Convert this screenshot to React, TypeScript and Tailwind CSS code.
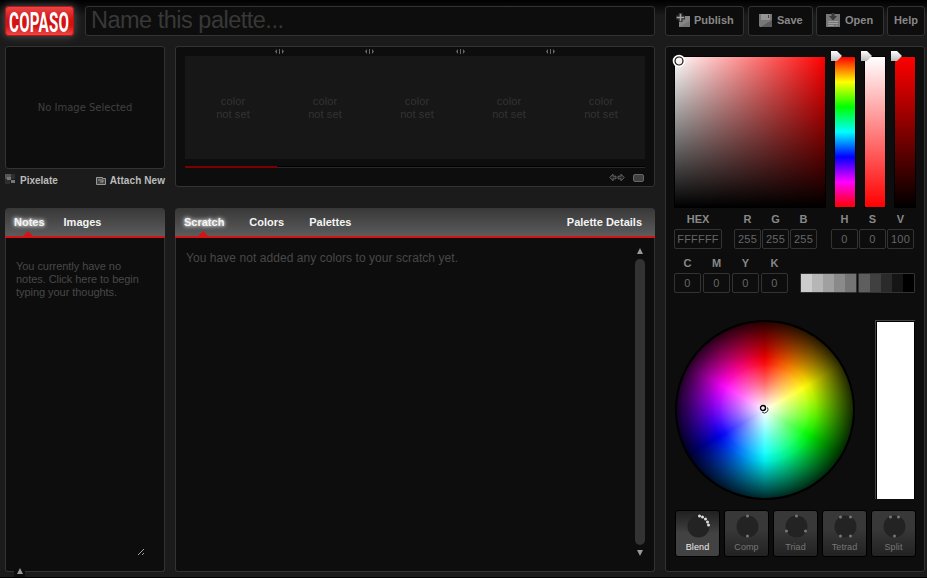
import type { ReactNode } from 'react';

type Dot = [number, number];

const SCHEMES: { name: string; dots: Dot[] }[] = [
  { name: 'Blend', dots: [[13.5, 2], [16.5, 3], [19.5, 5], [21.5, 8], [22.5, 11]] },
  { name: 'Comp', dots: [[12.5, 2], [12.5, 22]] },
  { name: 'Triad', dots: [[12.5, 2], [2.5, 17], [21.5, 17]] },
  { name: 'Tetrad', dots: [[7.5, 3], [17.5, 3], [7.5, 22], [17.5, 22]] },
  { name: 'Split', dots: [[8.5, 3], [16.5, 3], [12.5, 22]] },
];

const LIGHT_GRAYS = ['#cccccc', '#b6b6b6', '#a0a0a0', '#8a8a8a', '#747474'];
const DARK_GRAYS = ['#5e5e5e', '#404040', '#2a2a2a', '#151515', '#000000'];

export default function App() {
  return (
    <div className="flex h-[578px] w-[927px] flex-col overflow-hidden border-b border-black bg-[#1b1b1b] bg-[linear-gradient(to_bottom,#000_0px,#1b1b1b_16px)] pl-[5px] pt-[6px] font-['Liberation_Sans',Arial,sans-serif]">
      <Header />
      <main className="mt-[10px] flex h-[526px] gap-[10px]">
        <div className="flex w-[160px] flex-col">
          <ImageBox />
          <TabPanel active="Notes" tabs={['Images']} gap="ml-[19px]">
            <p className="pl-[10px] pt-[22px] text-[11px] leading-[13px] tracking-[-0.05px] text-[#484848]">
              You currently have no
              <br />
              notes. Click here to begin
              <br />
              typing your thoughts.
            </p>
            <svg className="absolute bottom-[15px] right-[19px] h-[8px] w-[8px]" viewBox="0 0 8 8">
              <path d="M1 7 7 1M5 7 7 5" stroke="#b5b5b5" strokeWidth=".9" />
            </svg>
            <div className="absolute -bottom-[6px] left-[8px] flex h-[12px] w-[11px] items-center justify-center bg-[#0d0d0d]">
              <Triangle />
            </div>
          </TabPanel>
        </div>
        <div className="flex w-[480px] flex-col">
          <PaletteStrip />
          <TabPanel active="Scratch" tabs={['Colors', 'Palettes']} gap="ml-[25px]" right="Palette Details">
            <div className="flex h-full justify-between">
              <p className="pl-[10px] pt-[12px] text-[12px] leading-[16px] tracking-[0.06px] text-[#484848]">
                You have not added any colors to your scratch yet.
              </p>
              <div className="mr-[9px] flex w-[10px] flex-col items-center pt-[10px]">
                <Triangle />
                <div className="my-[5px] h-[286px] w-[10px] rounded-full bg-[#333]" />
                <Triangle down />
              </div>
            </div>
          </TabPanel>
        </div>
        <ColorPanel />
      </main>
    </div>
  );
}

function Header() {
  return (
    <header className="flex h-[30px]">
      <Logo />
      <div className="ml-[11px] h-[30px] w-[570px] rounded-[3px] border border-[#333] bg-[#0d0d0d] pl-[5px] text-[23.5px] leading-[27px] tracking-[-0.5px] text-[#383838]">
        Name this palette...
      </div>
      <div className="ml-[10px] flex text-[11px] font-bold text-[#888]">
        <ToolButton className="w-[79px] pl-[10px]">
          <svg className="mr-[3px] h-[15px] w-[15px]" viewBox="0 0 15 15">
            <path d="M3 4h5l1-1h5v11H3z" fill="#858585" />
            <path d="M3 14 14 8v6z" fill="#757575" />
            <path d="M2.500 0h4v2.500H9v4H6.500V9h-4V6.500H0v-4h2.500z" fill="#333" />
            <path d="M4 1h1v3h3v1H5v3H4V5H1V4h3z" fill="#aaa" stroke="#999" strokeWidth=".5" />
          </svg>
          Publish
        </ToolButton>
        <ToolButton className="ml-[4px] w-[65px] pl-[10px]">
          <svg className="mr-[5px] h-[13px] w-[13px]" viewBox="0 0 13 13">
            <path d="M0 0h13v13H1l-1-1z" fill="#777" />
            <path d="M2 0h9v6H2z" fill="#959595" />
            <path d="M2 13 13 6v7z" fill="#5c5c5c" />
            <path d="M9 1h1v3H9z" fill="#444" />
          </svg>
          Save
        </ToolButton>
        <ToolButton className="ml-[3px] w-[68px] pl-[9px]">
          <svg className="mr-[5px] h-[14px] w-[14px]" viewBox="0 0 14 14">
            <path d="M0 1h14v13H0z" fill="#777" />
            <path d="M2 8.500h10M2 10.500h10M2 12.500h6M10 12.500h1" stroke="#a0a0a0" />
            <path d="M5.500 0h3v3h2.500L7 7.500 3 3h2.500z" fill="#3a3a3a" />
          </svg>
          Open
        </ToolButton>
        <ToolButton className="ml-[3px] w-[38px] justify-center">Help</ToolButton>
      </div>
    </header>
  );
}

function Logo() {
  return (
    <svg
      className="h-[30px] w-[69px] rounded-[4px] bg-[#d61b1b] shadow-[0_0_9px_#555]"
      viewBox="0 0 69 30"
    >
      <defs>
        <linearGradient id="logoFill" x2="0" y2="1">
          <stop stopColor="#e64a4a" />
          <stop offset=".45" stopColor="#d41313" />
          <stop offset=".65" stopColor="#d21010" />
          <stop offset="1" stopColor="#ee4a4a" />
        </linearGradient>
      </defs>
      <rect x=".5" y=".5" width="68" height="29" rx="3.5" fill="url(#logoFill)" stroke="#bd1212" />
      <text
        transform="translate(4 25.500) scale(.54 1)"
        textLength="111"
        fill="#fff"
        className="font-['Roboto',sans-serif] text-[28px] font-bold"
      >
        COPASO
      </text>
    </svg>
  );
}

function ToolButton({ className, children }: { className: string; children: ReactNode }) {
  return (
    <button
      type="button"
      className={'flex h-[30px] items-center rounded-[3px] border border-[#333] bg-[#0d0d0d] pb-[2px] ' + className}
    >
      {children}
    </button>
  );
}

function ImageBox() {
  return (
    <>
      <div className="flex h-[123px] w-[160px] items-center justify-center rounded-[3px] border border-[#333] bg-[#0d0d0d] font-['DejaVu_Sans',Verdana,sans-serif] text-[10px] text-[#404040]">
        No Image Selected
      </div>
      <div className="mb-[21px] mt-[5px] flex h-[13px] items-center text-[10px] font-bold text-[#bbb]">
        <svg className="mb-[3px] mr-[5px] h-[10px] w-[10px]" viewBox="0 0 10 10">
          <path d="M5 0h5v5H5zM0 5h5v5H0z" fill="#2e2e2e" />
          <path d="M0 0h6v5H0z" fill="#555" />
          <path d="M2 3h4v3H2zM6 6h4v3H6z" fill="#777" />
        </svg>
        Pixelate
        <svg className="ml-auto mr-[4px] h-[8px] w-[10px]" viewBox="0 0 10 8">
          <path d="M.5.5h6v1h3v6h-9z" fill="#444" stroke="#999" />
          <path d="M2 3h5v2H4" fill="none" stroke="#999" />
        </svg>
        <span className="tracking-[0.08px]">Attach New</span>
      </div>
    </>
  );
}

function PaletteStrip() {
  return (
    <section className="mb-[21px] h-[141px] rounded-[3px] border border-[#333] bg-[#0d0d0d] px-[9px]">
      <div className="flex h-[9px] items-center pl-[90px]">
        {[0, 1, 2, 3].map((i) => (
          <svg key={i} className="mr-[81.3px] h-[5px] w-[9px] shrink-0" viewBox="0 0 9 5">
            <path d="M2 0v5L0 2.500zM7 0v5L9 2.500z" fill="#666" />
            <path d="M4.500 0v5" stroke="#666" />
          </svg>
        ))}
      </div>
      <div className="grid h-[103px] grid-cols-5 bg-[#171717]">
        {[0, 1, 2, 3, 4].map((i) => (
          <div
            key={i}
            className="flex items-center justify-center pl-[4px] text-center text-[11px] leading-[13px] tracking-[0.1px] text-[#333]"
          >
            color
            <br />
            not set
          </div>
        ))}
      </div>
      <div className="mt-[7px] h-[2px] border-b border-[#2a2a2a] bg-black">
        <div className="h-[2px] w-[92px] bg-[#7c0000]" />
      </div>
      <div className="mt-[4px] flex h-[11px] items-center justify-end pr-[1px]">
        <svg className="h-[9px] w-[16px]" viewBox="0 0 16 9">
          <path
            d="M.8 4.500 4 1.200v2h3v2.600H4v2zM15.200 4.500 12 1.200v2H9v2.600h3v2z"
            fill="#222"
            stroke="#777"
            strokeWidth=".8"
          />
        </svg>
        <div className="ml-[8px] h-[8px] w-[11px] rounded-[2px] border border-[#666] bg-[#404040]" />
      </div>
    </section>
  );
}

function TabPanel({
  active,
  tabs,
  gap,
  right,
  children,
}: {
  active: string;
  tabs: string[];
  gap: string;
  right?: string;
  children: ReactNode;
}) {
  return (
    <section className="flex h-[364px] flex-col">
      <nav className="flex h-[30px] items-center rounded-t-[4px] border-b-2 border-[#d41414] bg-linear-to-b from-[#383838] to-[#5c5c5c] pl-[9px] pr-[13px] text-[11px] font-bold text-[#f4f4f4]">
        <span className="relative flex h-[28px] items-center [text-shadow:0_0_5px_#fff,0_0_3px_#bbb]">
          {active}
          <svg className="absolute bottom-0 left-1/2 -ml-[6px] h-[5px] w-[10px]" viewBox="0 0 10 5">
            <path d="M0 5 5 0l5 5z" fill="#d41414" />
          </svg>
        </span>
        {tabs.map((t) => (
          <span key={t} className={gap}>
            {t}
          </span>
        ))}
        {right && <span className="ml-auto">{right}</span>}
      </nav>
      <div className="relative min-h-0 flex-1 rounded-b-[3px] border border-t-0 border-[#333] bg-[#0d0d0d]">
        {children}
      </div>
    </section>
  );
}

function Triangle({ down }: { down?: boolean }) {
  return (
    <svg className={'h-[6px] w-[6px] shrink-0 ' + (down ? 'rotate-180' : '')} viewBox="0 0 6 6">
      <path d="M0 6 3 0l3 6z" fill="#999" />
    </svg>
  );
}

function ColorPanel() {
  return (
    <section className="h-[526px] w-[260px] rounded-[3px] border border-[#333] bg-[#0d0d0d] pl-[8px] pt-[10px]">
      <div className="flex h-[151px] pl-[1px]">
        <div className="relative h-[150px] w-[150px] bg-[linear-gradient(to_bottom,transparent,#000),linear-gradient(to_right,#fff,#f00)] outline outline-black">
          <svg className="absolute -left-[3px] -top-[3px] h-[14px] w-[14px]" viewBox="0 0 14 14">
            <circle cx="7" cy="7" r="5" fill="none" stroke="#fff" strokeWidth="2.600" />
            <circle cx="7" cy="7" r="4" fill="none" stroke="#111" strokeWidth="1.200" />
          </svg>
        </div>
        <Slider className="bg-[linear-gradient(to_bottom,#f00,#ff0,#0f0,#0ff,#00f,#f0f,#f00)]" />
        <Slider className="bg-[linear-gradient(to_bottom,#fff,#f00)]" />
        <Slider className="bg-[linear-gradient(to_bottom,#f00,#000)]" />
      </div>
      <div className="mt-[5px] flex">
        <Field label="HEX" value="FFFFFF" className="w-[48px]" />
        <Field label="R" value="255" className="ml-[12px] w-[27px]" />
        <Field label="G" value="255" className="ml-[1px] w-[27px]" />
        <Field label="B" value="255" className="ml-[1px] w-[27px]" />
        <Field label="H" value="0" className="ml-[14px] w-[27px]" />
        <Field label="S" value="0" className="ml-[1px] w-[27px]" />
        <Field label="V" value="100" className="ml-[1px] w-[27px]" />
      </div>
      <div className="mt-[8px] flex items-end">
        <div className="flex gap-[2px]">
          {['C', 'M', 'Y', 'K'].map((l) => (
            <Field key={l} label={l} value="0" className="w-[27px]" />
          ))}
        </div>
        <div className="ml-[12px] flex h-[20px] gap-[1px]">
          <Grays colors={LIGHT_GRAYS} />
          <Grays colors={DARK_GRAYS} />
        </div>
      </div>
      <div className="mt-[27px] flex h-[180px] justify-between pl-[1px] pr-[9px]">
        <Wheel />
        <div className="h-[179px] w-[40px] border-l border-t border-[#444] bg-black pl-[1px] pt-[1px]">
          <div className="h-[177px] w-[37px] bg-white" />
        </div>
      </div>
      <div className="mt-[10px] flex gap-[4px] pl-[1px]">
        {SCHEMES.map((s, i) => (
          <SchemeButton key={s.name} name={s.name} dots={s.dots} active={i === 0} />
        ))}
      </div>
    </section>
  );
}

function Slider({ className }: { className: string }) {
  return (
    <div className={'relative ml-[10px] h-[150px] w-[20px] outline outline-black ' + className}>
      <svg className="absolute -left-[4px] -top-[6px] h-[10px] w-[11px]" viewBox="0 0 11 10">
        <defs>
          <linearGradient id="thumb" x2="0" y2="1">
            <stop stopColor="#fff" />
            <stop offset="1" stopColor="#bbb" />
          </linearGradient>
        </defs>
        <path d="M0 0h6l5 5-5 5H0z" fill="url(#thumb)" />
      </svg>
    </div>
  );
}

function Field({ label, value, className }: { label: string; value: string; className: string }) {
  return (
    <label className={'flex flex-col items-center ' + className}>
      <span className="h-[16px] text-[11px] font-bold leading-[13px] text-[#888]">{label}</span>
      <span className="flex h-[20px] w-full items-center justify-center rounded-[2px] border border-[#333] text-[11px] tracking-[0.2px] text-[#666]">
        {value}
      </span>
    </label>
  );
}

function Grays({ colors }: { colors: string[] }) {
  return (
    <div className="flex h-[20px] w-[57px] rounded-[1px] border border-[#333]">
      {colors.map((c) => (
        <div key={c} className="flex-1" style={{ backgroundColor: c }} />
      ))}
    </div>
  );
}

function Wheel() {
  return (
    <div className="relative h-[180px] w-[180px] rounded-full border-2 border-black bg-[radial-gradient(closest-side,#fff_0%,rgba(255,255,255,0.42)_30%,rgba(255,255,255,0.06)_52%,transparent_60%),radial-gradient(closest-side,transparent_48%,rgba(0,0,0,0.08)_58%,rgba(0,0,0,0.84)_100%),conic-gradient(#f00,#ff0,#0f0,#0ff,#00f,#f0f,#f00)]">
      <svg className="absolute left-[82px] top-[82px] h-[12px] w-[12px]" viewBox="0 0 12 12" fill="none">
        <circle cx="4" cy="4" r="2.500" stroke="#000" strokeWidth="1.400" />
        <path d="M8.500 3.500A3.600 3.600 0 0 1 3.200 8.200" stroke="#333" />
      </svg>
    </div>
  );
}

function SchemeButton({ name, dots, active }: { name: string; dots: Dot[]; active: boolean }) {
  return (
    <button
      type="button"
      className={
        'flex h-[47px] w-[45px] flex-col items-center rounded-[3px] border border-black pt-[3px] text-[9px] ' +
        (active
          ? 'bg-linear-to-b from-[#202020] to-[#424242] to-50% text-[#eee]'
          : 'bg-linear-to-b from-[#383838] from-40% to-[#222] text-[#777]')
      }
    >
      <svg className="h-[24px] w-[24px]" viewBox="0 0 24 24">
        <circle cx="12.500" cy="12.500" r="11" fill="#232323" />
        {dots.map(([x, y]) => (
          <circle key={`${x}-${y}`} cx={x} cy={y} r="1.500" fill={active ? '#ddd' : '#777'} />
        ))}
      </svg>
      <span className="mt-[3px] leading-[12px] tracking-[0.1px]">{name}</span>
    </button>
  );
}
